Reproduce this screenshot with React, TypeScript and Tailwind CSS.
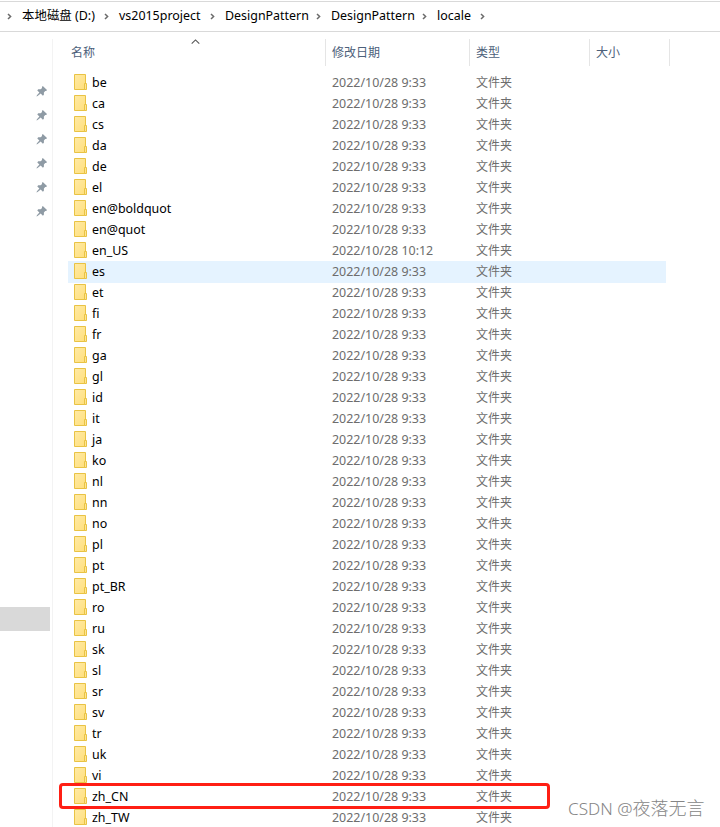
const folders = [
  "be", "ca", "cs", "da", "de", "el", "en@boldquot", "en@quot", "en_US", "es",
  "et", "fi", "fr", "ga", "gl", "id", "it", "ja", "ko", "nl", "nn", "no", "pl",
  "pt", "pt_BR", "ro", "ru", "sk", "sl", "sr", "sv", "tr", "uk", "vi", "zh_CN",
  "zh_TW",
];

const crumbs = [
  { name: "本地磁盘 (D:)", width: "w-[82px]" },
  { name: "vs2015project", width: "w-[91px]" },
  { name: "DesignPattern", width: "w-[91px]" },
  { name: "DesignPattern", width: "w-[91px]" },
  { name: "locale", width: "w-[43px]" },
];

const Chevron = () => (
  <svg className="w-[5px] h-[7px] shrink-0" viewBox="0 0 5 7" fill="none">
    <path d="M1 1 3.6 3.5 1 6" stroke="#6b6b6b" strokeWidth="1.5" />
  </svg>
);

const Pin = () => (
  <svg className="w-[11px] h-[11px] block" viewBox="0 0 11 11" fill="#8f9ba5">
    <path d="M6.8 0 11 4.1 10.2 5.1 9.2 5 7.9 6.4 7.9 8.8 6.9 9.7 4.7 7.6 1.6 10 0.5 10.4 0.9 9.3 3.4 6.4 1.3 4.4 2.2 3.3 4.6 3.3 6.1 1.9 5.9 0.9Z" />
  </svg>
);

const Folder = () => (
  <svg className="w-[14px] h-4 shrink-0" viewBox="0 0 14 16">
    <defs>
      <linearGradient id="folder" x1="0" y1="0" x2="1" y2="1">
        <stop offset="0" stopColor="#ffeaa5" />
        <stop offset="1" stopColor="#ffdf7c" />
      </linearGradient>
    </defs>
    <path d="M0.5 0.5H11.5V15.5H0.5Z" fill="url(#folder)" stroke="#e9c344" />
    <path d="M10.5 9.5H12.5V15.5H10.5Z" fill="#ffe492" stroke="#e9c344" />
  </svg>
);

const App = () => {
  return (
    <div className="relative w-[720px] h-[827px] overflow-hidden bg-white text-black text-[12.45px] font-['Noto_Sans','Noto_Sans_CJK_SC',sans-serif] whitespace-nowrap">
      <div className="mt-px h-[31px] border-y border-[#d9d9d9] flex items-center pl-[7px]">
        <Chevron />
        {crumbs.map((crumb, i) => (
          <div key={i} className="flex items-center pl-[10px]">
            <span className={crumb.width}>{crumb.name}</span>
            <Chevron />
          </div>
        ))}
      </div>

      <div className="flex h-[795px]">
        <div className="w-[52px] shrink-0">
          <div className="pt-[54px] pl-9 flex flex-col gap-[13px]">
            {[0, 1, 2, 3, 4, 5].map((i) => (
              <Pin key={i} />
            ))}
          </div>
          <div className="mt-[390px] w-[50px] h-6 bg-[#d9d9d9]" />
        </div>

        <div className="mt-[7px] flex-1 border-l border-[#f3f3f3]">
          <div className="relative flex h-[27px] text-xs leading-[27px] text-[#4c607a]">
            <div className="w-[273px] pl-[18px] border-r border-[#e5e5e5]">名称</div>
            <div className="w-36 pl-1.5 border-r border-[#e5e5e5]">修改日期</div>
            <div className="w-[120px] pl-1.5 border-r border-[#e5e5e5]">类型</div>
            <div className="w-20 pl-1.5 border-r border-[#e5e5e5]">大小</div>
            <svg className="absolute left-[138px] top-0 w-[9px] h-[6px]" viewBox="0 0 9 6" fill="none">
              <path d="M0.7 4.6 4.5 0.9 8.3 4.6" stroke="#555" strokeWidth="1.1" />
            </svg>
          </div>

          <div className="pt-[6px] pl-[15px]">
            {folders.map((name) => (
              <div key={name} className="h-[21px]">
                <div
                  className={`flex w-[598px] pl-1.5 leading-[22px] ${
                    name === "es" ? "h-[22px] bg-[#e5f3ff]" : "h-[21px]"
                  }`}
                >
                  <div className="w-[258px] flex gap-1">
                    <div className="pt-0.5">
                      <Folder />
                    </div>
                    <span>{name}</span>
                  </div>
                  <span className="w-36 text-[#6d6d6d]">
                    {name === "en_US" ? "2022/10/28 10:12" : "2022/10/28 9:33"}
                  </span>
                  <span className="text-xs leading-[22px] text-[#6d6d6d]">文件夹</span>
                </div>
              </div>
            ))}
          </div>
        </div>
      </div>

      <div className="absolute left-[59px] top-[783px] w-[491px] h-[26px] border-3 border-[#ff1f14] rounded" />
      <div className="absolute left-[568px] top-[796px] text-[17.2px] leading-6 font-light text-[#858585]">
        CSDN @<span className="text-[18px]">夜落无言</span>
      </div>
    </div>
  );
};

export default App;
